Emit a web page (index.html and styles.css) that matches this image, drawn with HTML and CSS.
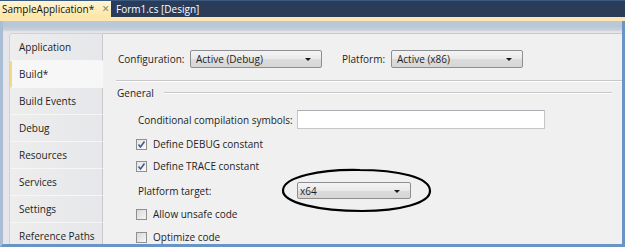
FILE: index.html
```html
<!DOCTYPE html>
<html>
<head>
<meta charset="utf-8">
<link rel="stylesheet" href="styles.css">
</head>
<body>
<div class="window">
  <div class="tabbar">
    <div class="tab active"><span class="tab-title">SampleApplication*</span><span class="tab-close">×</span></div>
    <div class="tab"><span class="tab-title">Form1.cs [Design]</span></div>
  </div>
  <div class="strip"></div>
  <div class="frame">
    <div class="body">
      <div class="sidebar">
        <div class="nav-item">Application</div>
        <div class="nav-item selected">Build*</div>
        <div class="nav-item">Build Events</div>
        <div class="nav-item">Debug</div>
        <div class="nav-item">Resources</div>
        <div class="nav-item">Services</div>
        <div class="nav-item">Settings</div>
        <div class="nav-item">Reference Paths</div>
      </div>
      <div class="content">
        <div class="config-row">
          <span class="lbl lbl-config">Configuration:</span>
          <div class="combo combo-wide"><span>Active (Debug)</span><i class="arrow"></i></div>
          <span class="lbl lbl-platform">Platform:</span>
          <div class="combo combo-wide"><span>Active (x86)</span><i class="arrow"></i></div>
        </div>
        <div class="separator"></div>
        <div class="group-head"><span>General</span><div class="group-line"></div></div>
        <div class="row row-cond">
          <span class="lbl lbl-cond">Conditional compilation symbols:</span>
          <div class="textbox"></div>
        </div>
        <div class="row row-check row-debug"><span class="check checked"><svg viewBox="0 0 11 11" width="11" height="11"><path d="M2.5 5.5 L4.5 8 L8.5 2.5" fill="none" stroke="#3f5a95" stroke-width="1.6"/></svg></span><span>Define DEBUG constant</span></div>
        <div class="row row-check row-trace"><span class="check checked"><svg viewBox="0 0 11 11" width="11" height="11"><path d="M2.5 5.5 L4.5 8 L8.5 2.5" fill="none" stroke="#3f5a95" stroke-width="1.6"/></svg></span><span>Define TRACE constant</span></div>
        <div class="row row-target">
          <span class="lbl lbl-cond">Platform target:</span>
          <div class="combo combo-target"><span>x64</span><i class="arrow"></i></div>
        </div>
        <div class="row row-check row-unsafe"><span class="check"></span><span>Allow unsafe code</span></div>
        <div class="row row-check row-opt"><span class="check"></span><span>Optimize code</span></div>
      </div>
    </div>
  </div>
  <svg class="circle" width="156" height="48" viewBox="0 0 156 48">
    <path d="M80 3 C40 2 4 10 3 23 C2 36 40 44 82 44 C120 44 150 36 150 24 C150 10 118 3 78 3" fill="none" stroke="#000" stroke-width="2.2"/>
  </svg>
</div>
</body>
</html>
```

FILE: styles.css
```css
html, body {
  margin: 0;
  padding: 0;
}
body {
  width: 625px;
  height: 247px;
  overflow: hidden;
  font-family: "Open Sans", "Noto Sans", sans-serif;
  font-size: 10px;
  color: #1e1e1e;
}
.window {
  position: relative;
  width: 625px;
  height: 247px;
  overflow: hidden;
  background: #f0f0f0;
}
.tabbar {
  height: 17px;
  display: flex;
  background: #2b3c59;
  border-top: 1px solid #3b5a82;
  box-sizing: border-box;
}
.tab {
  display: flex;
  align-items: center;
  height: 16px;
  color: #ffffff;
  padding-left: 5px;
}
.tab.active {
  width: 111px;
  box-sizing: border-box;
  padding-left: 2px;
  background: linear-gradient(#fff5d6, #fde5a4);
  color: #101010;
}
.tab-title {
  white-space: nowrap;
}
.tab-close {
  margin-left: 8px;
  color: #7a7460;
  font-size: 12px;
  line-height: 1;
}
.strip {
  height: 4px;
  background: #fde6b0;
}
.frame {
  height: 226px;
  border-left: 3px solid #a9bdd4;
  border-right: 3px solid #6a93c6;
  border-bottom: 3px solid #6a93c6;
  box-sizing: border-box;
  background: linear-gradient(#b9c8d8 0, #b9c8d8 6px, #c6ccd8 7px, #c6ccd8 9px, #dfe0e6 10px, #e6e6ea 12px);
  padding-top: 12px;
  padding-left: 6px;
}
.body {
  display: flex;
  height: 211px;
}
.sidebar {
  width: 94px;
  flex: none;
  display: flex;
  flex-direction: column;
  border-top-left-radius: 4px;
  overflow: hidden;
  border-top: 1px solid #d2d2d6;
  border-left: 1px solid #d2d2d6;
  box-sizing: border-box;
}
.nav-item {
  height: 27px;
  flex: none;
  box-sizing: border-box;
  display: flex;
  align-items: center;
  padding-left: 9px;
  background: linear-gradient(90deg, #ededed, #e6e7ea);
  border-bottom: 1px solid #f6f6f6;
  border-right: 1px solid #c9c9c9;
  white-space: nowrap;
}
.nav-item.selected {
  background: #f7f7f7;
  border-left: 2px solid #f3d98a;
  padding-left: 7px;
  border-right: 1px solid #f7f7f7;
}
.content {
  flex: 1;
  background: #f0f0f0;
  border-top: 1px solid #c9c9c9;
  display: flex;
  flex-direction: column;
  overflow: hidden;
}
.config-row {
  display: flex;
  align-items: center;
  height: 18px;
  margin-top: 16px;
  padding-left: 15px;
}
.lbl {
  white-space: nowrap;
}
.lbl-config {
  width: 72px;
  flex: none;
}
.lbl-platform {
  width: 49px;
  flex: none;
  margin-left: 20px;
}
.combo {
  height: 18px;
  box-sizing: border-box;
  border: 1px solid #8c8e91;
  border-radius: 2px;
  background: linear-gradient(#f4f4f4, #e9e9e9 50%, #dcdcdc 51%, #d6d6d6);
  display: flex;
  align-items: center;
  padding-left: 5px;
  position: relative;
  flex: none;
  white-space: nowrap;
}
.combo-wide {
  width: 132px;
}
.combo-target {
  width: 114px;
  height: 17px;
  padding-left: 2px;
}
.arrow {
  position: absolute;
  right: 10px;
  top: 50%;
  margin-top: -1px;
  width: 0;
  height: 0;
  border-left: 3px solid transparent;
  border-right: 3px solid transparent;
  border-top: 3px solid #1a1a1a;
}
.separator {
  margin-top: 12px;
  margin-left: 13px;
  height: 0;
  border-top: 1px solid #c8c8c8;
  border-bottom: 1px solid #ffffff;
}
.group-head {
  display: flex;
  align-items: center;
  height: 14px;
  margin-top: 4px;
  padding-left: 14px;
  padding-right: 10px;
}
.group-line {
  flex: 1;
  margin-left: 10px;
  border-top: 1px solid #c8c8c8;
  border-bottom: 1px solid #ffffff;
}
.row {
  display: flex;
  align-items: center;
  flex: none;
  white-space: nowrap;
}
.row-cond {
  height: 19px;
  margin-top: 10px;
  padding-left: 35px;
}
.lbl-cond {
  width: 159px;
  flex: none;
}
.textbox {
  width: 248px;
  height: 19px;
  box-sizing: border-box;
  background: #ffffff;
  border: 1px solid #c6c6c6;
  border-top-color: #abadb3;
}
.row-check {
  height: 18px;
  padding-left: 33px;
}
.row-debug { margin-top: 6px; }
.row-trace { margin-top: 4px; }
.row-target {
  height: 17px;
  margin-top: 7px;
  padding-left: 35px;
}
.row-unsafe { margin-top: 6px; }
.row-opt { margin-top: 5px; }
.check {
  width: 11px;
  height: 11px;
  box-sizing: border-box;
  border: 1px solid #8f8f8f;
  background: linear-gradient(135deg, #d8d8d8, #f6f6f6);
  margin-right: 6px;
  flex: none;
  display: flex;
}
.check svg {
  margin: -1px;
}
.check.checked {
  background: linear-gradient(135deg, #e4e4e4, #fbfbfb);
}
.circle {
  position: absolute;
  left: 280px;
  top: 167px;
}
```
